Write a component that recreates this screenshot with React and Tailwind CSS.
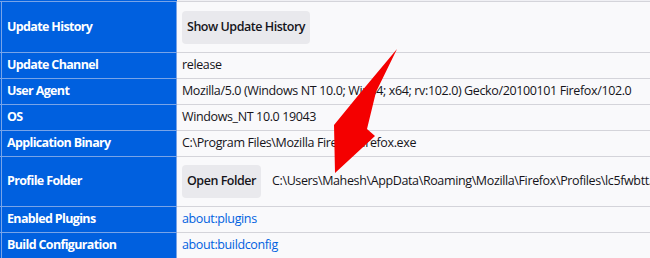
import React from "react";

const font = { fontFamily: '"Open Sans", "Noto Sans", sans-serif' };

function Label({ children, h }) {
  return (
    <div
      className={`w-[177px] shrink-0 flex items-center bg-[#0060df] border-t border-r border-[#78a4e8] pl-[7px] text-white font-bold text-[12.5px] tracking-[-0.65px] shadow-[inset_1px_0_0_#0060df,inset_2px_0_0_#78a4e8] ${h}`}
    >
      {children}
    </div>
  );
}

function Value({ children }) {
  return (
    <div className="flex-1 min-w-0 flex items-center border-t border-[#d4d4da] pl-[5px] text-[12.5px] tracking-[-0.37px] text-[#15141a] whitespace-nowrap overflow-hidden">
      {children}
    </div>
  );
}

function Row({ label, h = "h-[26px]", children }) {
  return (
    <div className="flex">
      <Label h={h}>{label}</Label>
      <Value>{children}</Value>
    </div>
  );
}

function Btn({ children }) {
  return (
    <span className="inline-flex items-center h-[33px] px-[5px] rounded-[4px] bg-[#e9e9ed] text-[12.5px] font-semibold tracking-[-0.47px] text-[#15141a]">
      {children}
    </span>
  );
}

export default function App() {
  return (
    <div className="relative w-[650px] h-[258px] overflow-hidden bg-[#f9f9fb]" style={font}>
      <div className="flex h-px">
        <div className="w-[177px] bg-[#0060df]" />
        <div className="flex-1 bg-[#f0f0f4]" />
      </div>
      <Row label="Update History" h="h-[51px]">
        <Btn>Show Update History</Btn>
      </Row>
      <Row label="Update Channel">release</Row>
      <Row label="User Agent">
        Mozilla/5.0 (Windows NT 10.0; Win64; x64; rv:102.0) Gecko/20100101 Firefox/102.0
      </Row>
      <Row label="OS">Windows_NT 10.0 19043</Row>
      <Row label="Application Binary">C:\Program Files\Mozilla Firefox\firefox.exe</Row>
      <Row label="Profile Folder" h="h-[50px]">
        <Btn>Open Folder</Btn>
        <span className="ml-[11px]">C:\Users\Mahesh\AppData\Roaming\Mozilla\Firefox\Profiles\lc5fwbtt.default-release</span>
      </Row>
      <Row label="Enabled Plugins">
        <span className="text-[#0061e0]">about:plugins</span>
      </Row>
      <Row label="Build Configuration">
        <span className="text-[#0061e0]">about:buildconfig</span>
      </Row>
      <svg className="absolute left-0 top-0 pointer-events-none" width="650" height="258">
        <polygon
          points="397,49 376,92 367,129 375,136 335,173 334,125 361,92"
          fill="#f40000"
        />
      </svg>
    </div>
  );
}
